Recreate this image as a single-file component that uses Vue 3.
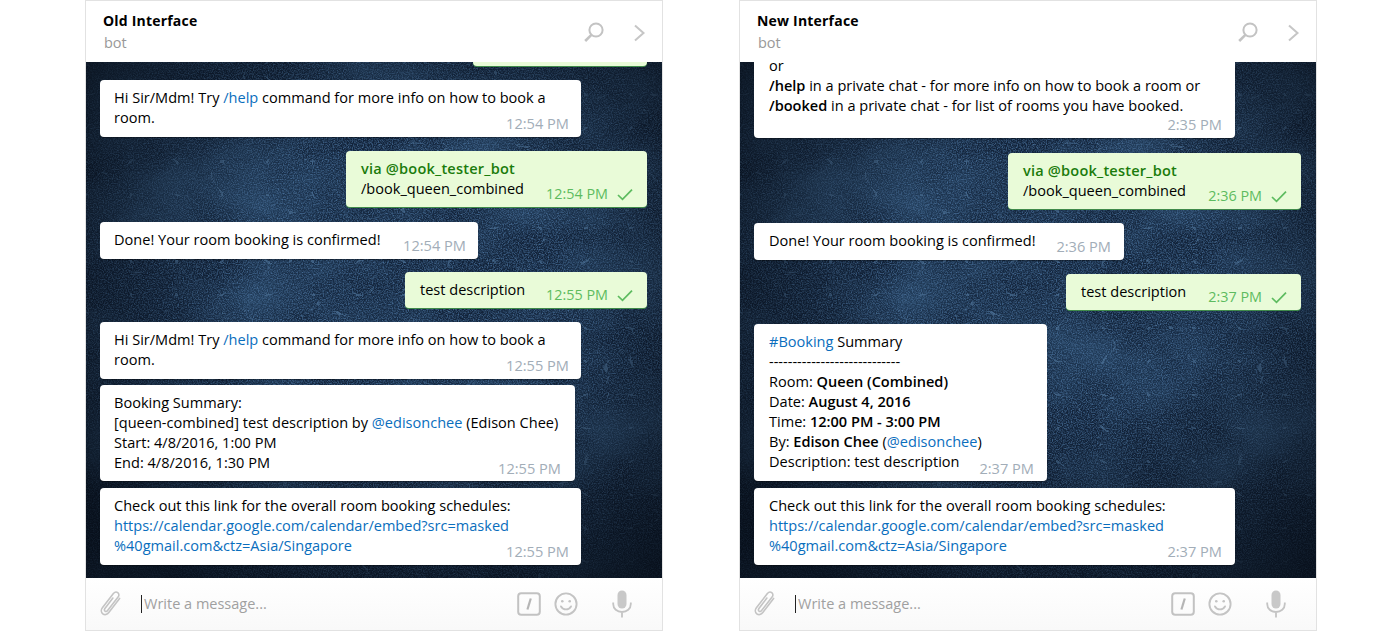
<script setup>
const panels = [
  {
    title: 'Old Interface',
    messages: [
      { out: true, width: 174, gap: 14, html: '&nbsp;', time: '' },
      { width: 481, gap: 14, time: '12:54 PM', html: 'Hi Sir/Mdm! Try <a>/help</a> command for more info on how to book a<br>room.' },
      { out: true, width: 301, gap: 15, time: '12:54 PM', html: '<b class="via">via @book_tester_bot</b><br>/book_queen_combined' },
      { width: 378, gap: 13, one: true, time: '12:54 PM', html: 'Done! Your room booking is confirmed!' },
      { out: true, width: 242, gap: 14, time: '12:55 PM', html: 'test description' },
      { width: 481, gap: 6, time: '12:55 PM', html: 'Hi Sir/Mdm! Try <a>/help</a> command for more info on how to book a<br>room.' },
      { width: 475, gap: 7, tight: true, time: '12:55 PM', html: 'Booking Summary:<br>[queen-combined] test description by <a>@edisonchee</a> (Edison Chee)<br>Start: 4/8/2016, 1:00 PM<br>End: 4/8/2016, 1:30 PM' },
      { width: 481, gap: 0, time: '12:55 PM', html: 'Check out this link for the overall room booking schedules:<br><a>https://calendar.google.com/calendar/embed?src=masked</a><br><a>%40gmail.com&amp;ctz=Asia/Singapore</a>' }
    ]
  },
  {
    title: 'New Interface',
    messages: [
      { width: 481, gap: 15, extra: true, time: '2:35 PM', html: 'or<br><b>/help</b> in a private chat - for more info on how to book a room or<br><b>/booked</b> in a private chat - for list of rooms you have booked.' },
      { out: true, width: 293, gap: 14, time: '2:36 PM', html: '<b class="via">via @book_tester_bot</b><br>/book_queen_combined' },
      { width: 370, gap: 14, one: true, time: '2:36 PM', html: 'Done! Your room booking is confirmed!' },
      { out: true, width: 235, gap: 14, time: '2:37 PM', html: 'test description' },
      { width: 293, gap: 7, summary: true, time: '2:37 PM', html: '<a>#Booking</a> Summary<br>----------------------------<br>Room: <b>Queen (Combined)</b><br>Date: <b>August 4, 2016</b><br>Time: <b>12:00 PM - 3:00 PM</b><br>By: <b>Edison Chee</b> (<a>@edisonchee</a>)<br>Description: test description' },
      { width: 481, gap: 0, time: '2:37 PM', html: 'Check out this link for the overall room booking schedules:<br><a>https://calendar.google.com/calendar/embed?src=masked</a><br><a>%40gmail.com&amp;ctz=Asia/Singapore</a>' }
    ]
  }
]
</script>

<template>
  <div class="page">
    <svg class="defs" width="0" height="0" aria-hidden="true">
      <defs>
        <filter id="slate" x="0" y="0" width="100%" height="100%" color-interpolation-filters="sRGB">
          <feFlood flood-color="#12233a" result="base" />
          <!-- big soft patches -->
          <feTurbulence type="fractalNoise" baseFrequency="0.009 0.012" numOctaves="5" seed="11" result="cloud" />
          <feColorMatrix in="cloud" type="matrix" values="0 0 0 0 0.14  0 0 0 0 0.25  0 0 0 0 0.37  2.2 0 0 0 -0.8" result="tint" />
          <!-- thin cracks: ridges of the noise where it comes near zero -->
          <feTurbulence type="turbulence" baseFrequency="0.022 0.03" numOctaves="2" seed="23" result="ridge" />
          <feColorMatrix in="ridge" type="matrix" values="0 0 0 0 0.32  0 0 0 0 0.47  0 0 0 0 0.62  -16 0 0 0 0.55" result="cracks" />
          <!-- fine speckle -->
          <feTurbulence type="fractalNoise" baseFrequency="0.8" numOctaves="2" seed="4" result="fine" />
          <feColorMatrix in="fine" type="matrix" values="0 0 0 0 0.27  0 0 0 0 0.42  0 0 0 0 0.58  0 2.1 0 0 -0.8" result="grain" />
          <feMerge>
            <feMergeNode in="base" />
            <feMergeNode in="tint" />
            <feMergeNode in="grain" />
            <feMergeNode in="cracks" />
          </feMerge>
        </filter>
        <radialGradient id="vignette" cx="55%" cy="42%" r="70%">
          <stop offset="0.4" stop-color="#050b14" stop-opacity="0" />
          <stop offset="1" stop-color="#050b14" stop-opacity="0.8" />
        </radialGradient>
      </defs>
    </svg>

    <section v-for="panel in panels" :key="panel.title" class="panel">
      <header class="head">
        <div class="peer">
          <div class="title">{{ panel.title }}</div>
          <div class="status">bot</div>
        </div>
        <svg class="ico-search" width="22" height="22" viewBox="0 0 22 22" fill="none" stroke="#c3c3c3">
          <circle cx="13" cy="9" r="6.6" stroke-width="2" />
          <path d="M8.4 13.8 2.2 20" stroke-width="2.6" />
        </svg>
        <svg class="ico-next" width="13" height="18" viewBox="0 0 13 18" fill="none" stroke="#c6c6c6" stroke-width="2">
          <path d="M2 1.5 10.5 9 2 16.5" />
        </svg>
      </header>

      <div class="chat">
        <svg class="slate" width="576" height="516" aria-hidden="true">
          <rect width="576" height="516" filter="url(#slate)" />
          <rect width="576" height="516" fill="url(#vignette)" />
        </svg>
        <div
          v-for="(m, i) in panel.messages"
          :key="i"
          class="bubble"
          :class="{ out: m.out, tight: m.tight, extra: m.extra, one: m.one, summary: m.summary }"
          :style="{ width: m.width + 'px', marginBottom: m.gap + 'px' }"
        >
          <div class="text" v-html="m.html"></div>
          <div v-if="m.time" class="meta">
            <span>{{ m.time }}</span>
            <svg v-if="m.out" width="16" height="13" viewBox="0 0 16 13" fill="none" stroke="#5dbb5f" stroke-width="1.7">
              <path d="M1 7 5.500 11.400 15 1.600" />
            </svg>
          </div>
        </div>
      </div>

      <footer class="foot">
        <svg class="ico-clip" width="24" height="26" viewBox="0 0 24 26" fill="none" stroke="#c4c4c4" stroke-width="1.600" stroke-linecap="round">
          <path d="M20.600 7.400 9.800 21.600c-1.600 2.100-4.200 2.600-6 1.200-1.800-1.400-2-4-.4-6.100L14.400 2.600c1.200-1.500 3.100-1.900 4.400-.9 1.300 1 1.500 2.900.3 4.400L8.600 19.600c-.7.900-1.800 1.100-2.600.5-.8-.6-.8-1.700-.1-2.600l8-10.400" />
        </svg>
        <div class="input"><i class="caret"></i><span>Write a message...</span></div>
        <svg class="ico-cmd" width="24" height="24" viewBox="0 0 24 24" fill="none" stroke="#c2c2c2">
          <rect x="1.200" y="1.200" width="21.600" height="21.600" rx="3" stroke-width="2" />
          <path d="M13.800 6.500 10.400 17.500" stroke-width="2.200" stroke="#b5b5b5" />
        </svg>
        <svg class="ico-smile" width="24" height="24" viewBox="0 0 24 24" fill="none" stroke="#c4c4c4" stroke-width="1.900">
          <circle cx="12" cy="12" r="10.600" />
          <path d="M7 14.400c1.200 2 3 3 5 3s3.800-1 5-3" stroke-linecap="round" />
          <circle cx="8.300" cy="9.300" r="1.300" fill="#c4c4c4" stroke="none" />
          <circle cx="15.700" cy="9.300" r="1.300" fill="#c4c4c4" stroke="none" />
        </svg>
        <svg class="ico-mic" width="20" height="28" viewBox="0 0 20 28" fill="none" stroke="#c4c4c4" stroke-width="1.800">
          <rect x="5.500" y="0.500" width="9" height="18" rx="4.500" fill="#c8c8c8" stroke="none" />
          <path d="M1.200 12.500v1.500c0 4.800 3.900 8 8.800 8s8.800-3.200 8.800-8v-1.500M10 22v5.500" />
        </svg>
      </footer>
    </section>
  </div>
</template>

<style>
html, body { margin: 0; background: #fff; }
</style>

<style scoped>
.page {
  display: flex;
  gap: 76px;
  padding-left: 85px;
  height: 631px;
  overflow: hidden;
  font-family: "Open Sans", sans-serif;
  color: #000;
}

.defs { position: absolute; }

.panel {
  width: 578px;
  box-sizing: border-box;
  height: 631px;
  display: flex;
  flex-direction: column;
  border: 1px solid #e2e2e2;
}

.head {
  flex: 0 0 61px;
  display: flex;
  align-items: flex-start;
  background: #fff;
  position: relative;
  z-index: 1;
}
.peer { flex: 1; padding: 10px 0 0 17px; }
.title {
  font-size: 14px;
  font-weight: 700;
  line-height: 20px;
  letter-spacing: 0.2px;
}
.status {
  margin-top: 2px;
  padding-left: 1px;
  font-size: 14.5px;
  line-height: 20px;
  color: #999;
}
.ico-search { margin: 20px 0 0; }
.ico-next { margin: 23px 16px 0 28px; }

.chat {
  flex: 0 0 516px;
  position: relative;
  display: flex;
  flex-direction: column;
  justify-content: flex-end;
  overflow: hidden;
  padding: 0 15px 13px 14px;
  box-sizing: border-box;
  background: #0d1b2d;
}
.slate { position: absolute; left: 0; top: 0; }

.bubble {
  position: relative;
  flex: none;
  box-sizing: border-box;
  align-self: flex-start;
  padding: 7px 12px 10px 14px;
  background: #fff;
  border-radius: 4px;
  box-shadow: 0 1px 1px rgba(0, 0, 0, 0.35);
  font-size: 14.56px;
  line-height: 20px;
}
.panel + .panel .bubble { padding-left: 15px; }
.bubble.tight { padding-bottom: 9px; }
.bubble.extra { padding-top: 6px; padding-bottom: 23px; }
.bubble.out {
  align-self: flex-end;
  padding: 7px 12px 9px 15px;
  background: #e9fbd8;
  box-shadow: 0 1px 0 #3f8a4a;
}

.text { white-space: nowrap; }
.text :deep(a) { color: #0a6ebd; }
.text :deep(b) { font-weight: 600; }
.text :deep(.via) { color: #1b7c0c; font-weight: 600; letter-spacing: 0.2px; }

.meta {
  position: absolute;
  right: 12px;
  bottom: 4px;
  display: flex;
  align-items: center;
  gap: 9px;
  font-size: 14.6px;
  line-height: 20px;
  color: #a2adb8;
}
.panel + .panel .meta { right: 13px; }
.tight .meta { right: 14px; bottom: 3px; }
.summary .meta { bottom: 3px; }
.bubble.out .meta { right: 14px; bottom: 3px; font-size: 14.4px; color: #5dbb5f; }

.foot {
  flex: 0 0 52px;
  display: flex;
  align-items: center;
  background: linear-gradient(#fff, #f9f9f9);
  position: relative;
}
.ico-clip { margin-left: 13px; }
.input {
  flex: 1;
  display: flex;
  align-items: center;
  margin: 0 0 1px 18px;
  font-size: 14.5px;
  color: #a0a0a0;
}
.caret {
  width: 1px;
  height: 18px;
  background: #222;
  margin-right: 2px;
}
.ico-smile { margin-left: 13px; }
.ico-mic { margin: 0 30px 0 34px; }
</style>
